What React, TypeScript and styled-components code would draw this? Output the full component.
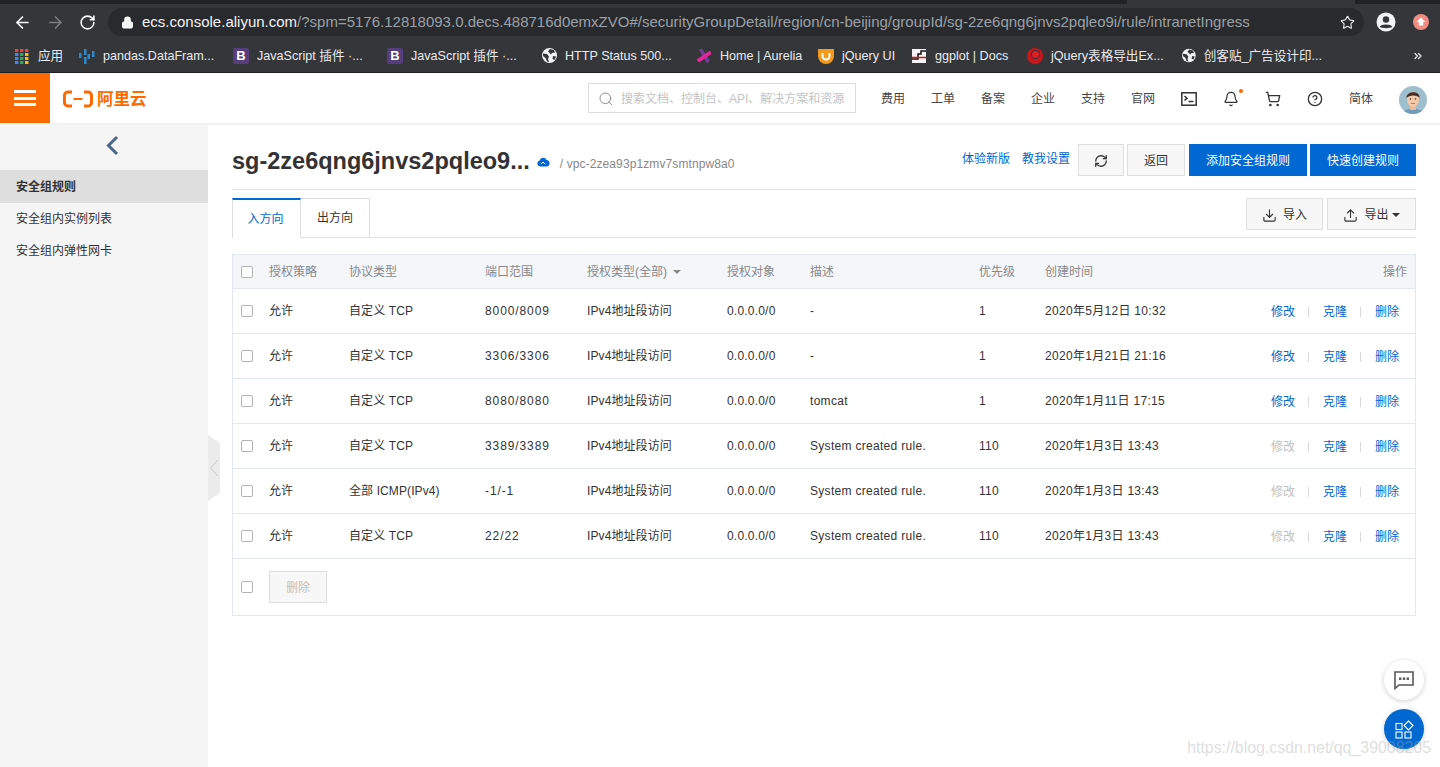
import React from "react";
import styled, { createGlobalStyle } from "styled-components";
import {
  ArrowLeft,
  ArrowRight,
  RotateCw,
  Lock,
  Star,
  Bell,
  ShoppingCart,
  CircleHelp,
  Search,
  RefreshCw,
  Download,
  Upload,
  ChevronsRight,
} from "lucide-react";

const FONT = `"Liberation Sans", "Noto Sans CJK SC", sans-serif`;
const BLUE = "#0068d0";

const GlobalStyle = createGlobalStyle`
  html, body {
    margin: 0;
    padding: 0;
    height: 100%;
    overflow: hidden;
    background: #fff;
    font-family: ${FONT};
    line-height: 16px;
  }
  * { box-sizing: border-box; }
`;

const Page = styled.div`
  position: relative;
  width: 1440px;
  height: 767px;
  overflow: hidden;
  display: flex;
  flex-direction: column;
`;

/* browser chrome */
const TabStrip = styled.div`
  height: 4px;
  background: #202124;
  padding-left: 1127px;
`;
const ActiveTab = styled.div`
  width: 228px;
  height: 4px;
  background: #35363a;
`;
const Toolbar = styled.div`
  height: 32px;
  background: #35363a;
  display: flex;
  align-items: flex-end;
  padding-left: 13px;
  color: #fff;
`;
const NavIcons = styled.div`
  width: 95px;
  height: 28px;
  display: flex;
  align-items: center;
  gap: 14px;
`;
const UrlBar = styled.div`
  width: 1256px;
  height: 28px;
  border-radius: 14px;
  background: #292a2d;
  display: flex;
  align-items: center;
  padding: 0 9px 0 13px;
  font-size: 15px;
  white-space: nowrap;
`;
const UrlHost = styled.span`
  color: #f1f3f4;
  margin-left: 8px;
`;
const UrlRest = styled.span`
  color: #9aa0a6;
  flex: 1;
`;
const ProfileIcons = styled.div`
  flex: 1;
  height: 28px;
  display: flex;
  align-items: center;
  gap: 17px;
  padding-left: 12px;
`;
const Bookmarks = styled.div`
  height: 37px;
  background: #35363a;
  border-bottom: 1px solid #1e1f22;
  display: flex;
  align-items: center;
  padding: 3px 0 0 15px;
  color: #e8eaed;
  font-size: 12.6px;
`;
const Bookmark = styled.div<{ $w: number; $gap?: number }>`
  width: ${(p) => p.$w}px;
  flex: none;
  display: flex;
  align-items: center;
  gap: ${(p) => p.$gap ?? 8}px;
  white-space: nowrap;
`;
const Favicon = styled.span<{ $bg: string }>`
  width: 16px;
  height: 16px;
  flex: none;
  border-radius: 2px;
  background: ${(p) => p.$bg};
  color: #fff;
  font-size: 13px;
  font-weight: 700;
  display: flex;
  align-items: center;
  justify-content: center;
`;
const MoreBookmarks = styled.div`
  margin-left: auto;
  margin-right: 16px;
  display: flex;
`;

/* console header */
const ConsoleHeader = styled.header`
  height: 52px;
  flex: none;
  background: #fff;
  border-bottom: 2px solid #f1f1f2;
  display: flex;
  align-items: flex-start;
`;
const MenuButton = styled.div`
  width: 50px;
  height: 50px;
  background: #ff6a00;
  display: flex;
  flex-direction: column;
  align-items: center;
  justify-content: center;
  gap: 3.5px;
`;
const MenuBar = styled.span`
  width: 22px;
  height: 3px;
  background: #fff;
`;
const Logo = styled.div`
  margin-left: 13px;
  width: 525px;
  height: 50px;
  padding-top: 2px;
  display: flex;
  align-items: center;
  gap: 4px;
  color: #ff6a00;
  font-size: 16.5px;
  font-weight: 700;
`;
const SearchBox = styled.div`
  width: 268px;
  height: 30px;
  margin-top: 10px;
  padding: 1px 0 0 9px;
  border: 1px solid #dcdcdc;
  display: flex;
  align-items: center;
  gap: 7px;
  font-size: 12px;
  color: #c4c4c4;
  white-space: nowrap;
`;
const TopNav = styled.nav`
  height: 50px;
  margin-left: 25px;
  padding-top: 2px;
  display: flex;
  align-items: center;
  font-size: 12px;
  color: #444;
  gap: 26px;
`;
const BellWrap = styled.span`
  position: relative;
  display: flex;
`;
const BellDot = styled.span`
  position: absolute;
  top: -2px;
  right: -4px;
  width: 4px;
  height: 4px;
  border-radius: 50%;
  background: #ff6a00;
`;
const AvatarWrap = styled.span`
  display: flex;
  margin-top: 2px;
`;

/* body */
const Body = styled.div`
  flex: 1;
  display: flex;
  min-height: 0;
`;
const Sidebar = styled.aside`
  width: 208px;
  flex: none;
  background: #f5f5f6;
`;
const SideBack = styled.div`
  height: 45px;
  padding: 10px 0 0 105px;
  display: flex;
  align-items: flex-start;
`;
const SideItem = styled.div<{ $active?: boolean }>`
  height: 33px;
  margin-bottom: ${(p) => (p.$active ? 0 : -1)}px;
  padding: 0 0 ${(p) => (p.$active ? 0 : 2)}px 16px;
  display: flex;
  align-items: center;
  font-size: 12px;
  color: #333;
  font-weight: ${(p) => (p.$active ? 700 : 400)};
  background: ${(p) => (p.$active ? "#dedede" : "transparent")};
`;
const Collapse = styled.div`
  position: absolute;
  left: 208px;
  top: 435px;
  width: 12px;
  height: 66px;
  background: #ebebeb;
  clip-path: polygon(0 0, 100% 12%, 100% 88%, 0 100%);
  display: flex;
  align-items: center;
  justify-content: center;
`;

const Main = styled.main`
  flex: 1;
  padding: 0 24px;
`;
const TitleRow = styled.div`
  height: 65px;
  border-bottom: 1px solid #dedede;
  display: flex;
  align-items: flex-start;
`;
const Title = styled.h1`
  margin: 22px 0 0;
  font-size: 23.5px;
  line-height: 28px;
  font-weight: 700;
  color: #333;
  white-space: nowrap;
`;
const CloudIcon = styled.span`
  margin: 32px 0 0 7px;
  display: flex;
`;
const VpcPath = styled.span`
  margin: 31px 0 0 10px;
  font-size: 12px;
  color: #888;
  letter-spacing: 0.1px;
`;
const HeaderActions = styled.div`
  margin-left: auto;
  margin-top: 19px;
  display: flex;
  align-items: flex-start;
`;
const TextLink = styled.a`
  font-size: 12px;
  line-height: 30px;
  color: ${BLUE};
  margin-right: 12px;
  white-space: nowrap;
`;
const Button = styled.button<{ $w: number; $primary?: boolean; $disabled?: boolean; $ml?: number }>`
  width: ${(p) => p.$w}px;
  height: 32px;
  flex: none;
  margin: 0 0 0 ${(p) => p.$ml ?? 0}px;
  padding: 2px 0 0;
  border: 1px solid ${(p) => (p.$primary ? BLUE : "#dedede")};
  background: ${(p) => (p.$primary ? BLUE : "#f7f7f7")};
  color: ${(p) => (p.$primary ? "#fff" : p.$disabled ? "#c1c1c1" : "#333")};
  font-family: ${FONT};
  font-size: 12px;
  line-height: 16px;
  display: flex;
  align-items: center;
  justify-content: center;
  gap: 6px;
`;
const Caret = styled.span<{ $color?: string; $ml?: number }>`
  width: 0;
  height: 0;
  margin-left: ${(p) => p.$ml ?? 0}px;
  border-left: 4px solid transparent;
  border-right: 4px solid transparent;
  border-top: 4px solid ${(p) => p.$color ?? "#333"};
`;

const TabsRow = styled.div`
  margin-top: 8px;
  height: 40px;
  border-bottom: 1px solid #dedede;
  display: flex;
  align-items: flex-start;
`;
const Tab = styled.div<{ $active?: boolean; $w: number }>`
  width: ${(p) => p.$w}px;
  height: 40px;
  padding-right: ${(p) => (p.$active ? 2 : 0)}px;
  background: #fff;
  border: 1px solid #dedede;
  border-left-width: ${(p) => (p.$active ? 1 : 0)}px;
  border-top: ${(p) => (p.$active ? `2px solid ${BLUE}` : "1px solid #dedede")};
  border-bottom: ${(p) => (p.$active ? "1px solid #fff" : "1px solid #dedede")};
  color: ${(p) => (p.$active ? BLUE : "#333")};
  font-size: 12px;
  display: flex;
  align-items: center;
  justify-content: center;
`;
const TabTools = styled.div`
  margin-left: auto;
  display: flex;
  gap: 4px;
`;

const Table = styled.div`
  margin-top: 16px;
  border: 1px solid #e3e7ef;
  font-size: 12px;
  color: #333;
`;
const Row = styled.div<{ $head?: boolean }>`
  height: ${(p) => (p.$head ? 34 : 45)}px;
  display: grid;
  grid-template-columns: 36px 80px 136px 102px 140px 83px 169px 66px 1fr auto;
  align-items: center;
  background: ${(p) => (p.$head ? "#f4f6fa" : "#fff")};
  border-bottom: 1px solid #e3e7ef;
  color: ${(p) => (p.$head ? "#888" : "#333")};
  white-space: nowrap;
`;
const Cell = styled.span<{ $ls?: number }>`
  letter-spacing: ${(p) => p.$ls ?? 0}px;
`;
const SortHead = styled.span`
  display: flex;
  align-items: center;
  gap: 6px;
`;
const Checkbox = styled.span`
  width: 12px;
  height: 12px;
  margin-left: 8px;
  border: 1px solid #b3b3b3;
  border-radius: 2px;
  background: #fff;
  display: block;
`;
const HeadOps = styled.span`
  padding-right: 8px;
  text-align: right;
`;
const Ops = styled.span`
  display: flex;
  align-items: center;
  padding: 1px 16px 0 0;
`;
const OpLink = styled.a<{ $off?: boolean }>`
  color: ${(p) => (p.$off ? "#c1c1c1" : BLUE)};
`;
const OpSep = styled.span`
  width: 1px;
  height: 10px;
  margin: 0 13.5px;
  background: #d8d8d8;
`;
const TableFoot = styled.div`
  height: 56px;
  display: flex;
  align-items: center;
  gap: 16px;
`;

/* floating */
const Fab = styled.div<{ $primary?: boolean; $top: number }>`
  position: absolute;
  left: 1384px;
  top: ${(p) => p.$top}px;
  width: 40px;
  height: 40px;
  border-radius: 50%;
  background: ${(p) => (p.$primary ? BLUE : "#fff")};
  box-shadow: 0 1px 5px rgba(0, 0, 0, 0.2);
  display: flex;
  align-items: center;
  justify-content: center;
`;
const Watermark = styled.div`
  position: absolute;
  right: 9px;
  top: 739px;
  font-size: 15.9px;
  line-height: 18px;
  color: rgba(170, 170, 170, 0.4);
  white-space: nowrap;
`;

const AppsIcon = () => (
  <svg width="14" height="16" viewBox="0 0 14 16">
    {["#e8453c", "#e8453c", "#e8453c", "#4285f4", "#34a853", "#fbbc05", "#4285f4", "#34a853", "#fbbc05", "#4285f4", "#34a853", "#fbbc05"].map(
      (c, i) => (
        <rect key={i} x={(i % 3) * 5} y={Math.floor(i / 3) * 4 + 1} width="3.4" height="3" fill={c} />
      )
    )}
  </svg>
);

const PandasIcon = () => (
  <svg width="16" height="16" viewBox="0 0 16 16" fill="#2f86c8">
    <rect x="0" y="5" width="2.5" height="5" />
    <rect x="5" y="1" width="2.5" height="6" />
    <rect x="5" y="9" width="2.5" height="7" />
    <rect x="8.5" y="6" width="2.5" height="5" />
    <rect x="13" y="3" width="2.5" height="6" />
  </svg>
);

const AureliaIcon = () => (
  <svg width="16" height="16" viewBox="0 0 16 16">
    <path d="M3 2 L6 0.5 L14 13 L11 15.5 Z" fill="#7a3ea8" opacity="0.85" />
    <path d="M0.5 11.5 L14 2.5 L15.5 6 L3 14.5 Z" fill="#e6249b" />
  </svg>
);

const JQueryIcon = () => (
  <svg width="16" height="16" viewBox="0 0 16 16">
    <path d="M0 1 H16 V8 A8 8 0 0 1 0 8 Z" fill="#f39a1d" />
    <path d="M4.5 5 V8 A3.5 3.5 0 0 0 11.5 8 V5" fill="none" stroke="#fff" strokeWidth="2" />
  </svg>
);

const GgplotIcon = () => (
  <svg width="14" height="14" viewBox="0 0 14 14">
    <rect width="14" height="14" fill="#f4f4f4" />
    <path d="M0 10 H6 V5 H9 V2 H14" fill="none" stroke="#111" strokeWidth="1.5" />
    <path d="M0 8.5 H14" stroke="#e01010" strokeWidth="1.5" />
  </svg>
);

const RedIcon = () => (
  <svg width="16" height="16" viewBox="0 0 16 16">
    <circle cx="8" cy="8" r="8" fill="#c8161d" />
    <circle cx="8.5" cy="6.5" r="4.5" fill="#35363a" />
    <circle cx="8.5" cy="6.5" r="3.5" fill="#e02020" />
  </svg>
);

const GlobeIcon = () => (
  <svg width="15" height="15" viewBox="0 0 15 15">
    <circle cx="7.5" cy="7.5" r="7.5" fill="#f1f3f4" />
    <path d="M1 5.5 L5 6 L7 8.5 L6 11 L7 14 L5 13.5 L3.5 10 L1 8 Z" fill="#35363a" />
    <path d="M8 1 L12 2 L13 4.5 L10 5 L9 6.5 L7.5 5 L6 3.5 Z" fill="#35363a" />
    <path d="M11 8 L14 8.5 L12.5 12 L10.5 11 Z" fill="#35363a" />
  </svg>
);

const ProfileIcon = () => (
  <svg width="20" height="20" viewBox="0 0 20 20">
    <circle cx="10" cy="10" r="9.5" fill="#f1f3f4" />
    <circle cx="10" cy="7.5" r="3.2" fill="#35363a" />
    <path d="M3.8 15 C5 11.8 15 11.8 16.2 15 C14.5 16.5 5.5 16.5 3.8 15 Z" fill="#35363a" />
  </svg>
);

const UpdateIcon = () => (
  <svg width="16" height="16" viewBox="0 0 16 16">
    <circle cx="8" cy="8" r="8" fill="#f28b82" />
    <path d="M8 3.5 L12.5 8 H10.2 V11.5 H5.8 V8 H3.5 Z" fill="#fff" />
  </svg>
);

const LogoMark = () => (
  <svg width="30" height="18" viewBox="0 0 30 18" fill="none" stroke="#ff6a00">
    <path d="M9 2 H5 A3.5 3.5 0 0 0 1.5 5.5 V12.5 A3.5 3.5 0 0 0 5 16 H9" strokeWidth="3" />
    <path d="M21 2 H25 A3.5 3.5 0 0 1 28.5 5.5 V12.5 A3.5 3.5 0 0 1 25 16 H21" strokeWidth="3" />
    <path d="M10.5 9 H19.5" strokeWidth="2" />
  </svg>
);

const TerminalIcon = () => (
  <svg width="16" height="14" viewBox="0 0 16 14" fill="none" stroke="#333" strokeWidth="1.5">
    <rect x="0.8" y="0.8" width="14.4" height="12.4" />
    <path d="M3.5 4 L6 6.2 L3.5 8.4" />
    <path d="M7.5 9.5 H12.5" />
  </svg>
);

const Avatar = () => (
  <svg width="28" height="28" viewBox="0 0 28 28">
    <clipPath id="avatar-clip">
      <circle cx="14" cy="14" r="14" />
    </clipPath>
    <g clipPath="url(#avatar-clip)">
      <rect width="28" height="28" fill="#9fbfce" />
      <path d="M3 28 C4 21 24 21 25 28 Z" fill="#6f9db8" />
      <rect x="11" y="18" width="6" height="6" fill="#eab998" />
      <ellipse cx="14" cy="13.5" rx="6" ry="7.5" fill="#f3c9a8" />
      <path d="M7.5 12 C7 5 21 4 20.5 12 C19 8.5 10 8.5 7.5 12 Z" fill="#4a2f25" />
      <circle cx="11.5" cy="13" r="0.8" fill="#333" />
      <circle cx="16.5" cy="13" r="0.8" fill="#333" />
      <path d="M12 17.5 H16" stroke="#b5654f" strokeWidth="0.8" />
    </g>
  </svg>
);

const CloudSmall = () => (
  <svg width="13" height="10" viewBox="0 0 13 10">
    <path d="M3 9.5 A3 3 0 0 1 2.6 3.6 A3.7 3.7 0 0 1 9.6 3 A3.3 3.3 0 0 1 10 9.5 Z" fill={BLUE} />
    <path d="M4 7 L6 5 L8 7" fill="none" stroke="#fff" strokeWidth="1" />
  </svg>
);

const BackChevron = () => (
  <svg width="14" height="21" viewBox="0 0 14 21" fill="none" stroke="#4d6788" strokeWidth="3">
    <path d="M12 2 L3.5 10.5 L12 19" />
  </svg>
);

const HandleChevron = () => (
  <svg width="10" height="18" viewBox="0 0 10 18" fill="none" stroke="#c6c6c6" strokeWidth="1">
    <path d="M9 1 L1.5 9 L9 17" />
  </svg>
);

const ChatIcon = () => (
  <svg width="20" height="19" viewBox="0 0 20 19" fill="none">
    <path d="M1 1 H19 V14 H5 L1 17.5 Z" stroke="#555" strokeWidth="1.6" />
    <rect x="5" y="6.5" width="2.4" height="2.4" fill="#555" />
    <rect x="8.8" y="6.5" width="2.4" height="2.4" fill="#555" />
    <rect x="12.6" y="6.5" width="2.4" height="2.4" fill="#555" />
  </svg>
);

const WidgetsIcon = () => (
  <svg width="19" height="19" viewBox="0 0 19 19" fill="none" stroke="#fff" strokeWidth="1.1">
    <rect x="1" y="3.5" width="6" height="6" />
    <rect x="1" y="12" width="6" height="6" />
    <rect x="10" y="12" width="6" height="6" />
    <path d="M13.5 1 L18 5.5 L13.5 10 L9 5.5 Z" />
  </svg>
);

const RULES = [
  { proto: "自定义 TCP", port: "8000/8009", desc: "-", prio: "1", time: "2020年5月12日 10:32", locked: false },
  { proto: "自定义 TCP", port: "3306/3306", desc: "-", prio: "1", time: "2020年1月21日 21:16", locked: false },
  { proto: "自定义 TCP", port: "8080/8080", desc: "tomcat", prio: "1", time: "2020年1月11日 17:15", locked: false },
  { proto: "自定义 TCP", port: "3389/3389", desc: "System created rule.", prio: "110", time: "2020年1月3日 13:43", locked: true },
  { proto: "全部 ICMP(IPv4)", port: "-1/-1", desc: "System created rule.", prio: "110", time: "2020年1月3日 13:43", locked: true },
  { proto: "自定义 TCP", port: "22/22", desc: "System created rule.", prio: "110", time: "2020年1月3日 13:43", locked: true },
];

const App = () => (
  <Page>
    <GlobalStyle />
    <TabStrip>
      <ActiveTab />
    </TabStrip>
    <Toolbar>
      <NavIcons>
        <ArrowLeft size={19} strokeWidth={2} />
        <ArrowRight size={19} strokeWidth={2} color="#7b7d80" />
        <RotateCw size={17} strokeWidth={2.2} />
      </NavIcons>
      <UrlBar>
        <Lock size={13} fill="#f1f3f4" strokeWidth={2} />
        <UrlHost>ecs.console.aliyun.com</UrlHost>
        <UrlRest>/?spm=5176.12818093.0.decs.488716d0emxZVO#/securityGroupDetail/region/cn-beijing/groupId/sg-2ze6qng6jnvs2pqleo9i/rule/intranetIngress</UrlRest>
        <Star size={15} strokeWidth={1.8} color="#e8eaed" />
      </UrlBar>
      <ProfileIcons>
        <ProfileIcon />
        <UpdateIcon />
      </ProfileIcons>
    </Toolbar>
    <Bookmarks>
      <Bookmark $w={64} $gap={9}>
        <AppsIcon />
        应用
      </Bookmark>
      <Bookmark $w={154}>
        <PandasIcon />
        pandas.DataFram...
      </Bookmark>
      <Bookmark $w={154}>
        <Favicon $bg="#563d7c">B</Favicon>
        JavaScript 插件 ·...
      </Bookmark>
      <Bookmark $w={155}>
        <Favicon $bg="#563d7c">B</Favicon>
        JavaScript 插件 ·...
      </Bookmark>
      <Bookmark $w={154}>
        <GlobeIcon />
        HTTP Status 500...
      </Bookmark>
      <Bookmark $w={122}>
        <AureliaIcon />
        Home | Aurelia
      </Bookmark>
      <Bookmark $w={94}>
        <JQueryIcon />
        jQuery UI
      </Bookmark>
      <Bookmark $w={115} $gap={9}>
        <GgplotIcon />
        ggplot | Docs
      </Bookmark>
      <Bookmark $w={155}>
        <RedIcon />
        jQuery表格导出Ex...
      </Bookmark>
      <Bookmark $w={140}>
        <GlobeIcon />
        创客贴_广告设计印...
      </Bookmark>
      <MoreBookmarks>
        <ChevronsRight size={12} strokeWidth={2.5} />
      </MoreBookmarks>
    </Bookmarks>

    <ConsoleHeader>
      <MenuButton>
        <MenuBar />
        <MenuBar />
        <MenuBar />
      </MenuButton>
      <Logo>
        <LogoMark />
        阿里云
      </Logo>
      <SearchBox>
        <Search size={16} strokeWidth={1.4} color="#888" />
        搜索文档、控制台、API、解决方案和资源
      </SearchBox>
      <TopNav>
        <span>费用</span>
        <span>工单</span>
        <span>备案</span>
        <span>企业</span>
        <span>支持</span>
        <span>官网</span>
        <TerminalIcon />
        <BellWrap>
          <Bell size={16} strokeWidth={1.8} color="#333" />
          <BellDot />
        </BellWrap>
        <ShoppingCart size={16} strokeWidth={2} color="#333" />
        <CircleHelp size={16} strokeWidth={2} color="#333" />
        <span>简体</span>
        <AvatarWrap>
          <Avatar />
        </AvatarWrap>
      </TopNav>
    </ConsoleHeader>

    <Body>
      <Sidebar>
        <SideBack>
          <BackChevron />
        </SideBack>
        <SideItem $active>安全组规则</SideItem>
        <SideItem>安全组内实例列表</SideItem>
        <SideItem>安全组内弹性网卡</SideItem>
      </Sidebar>
      <Main>
        <TitleRow>
          <Title>sg-2ze6qng6jnvs2pqleo9...</Title>
          <CloudIcon>
            <CloudSmall />
          </CloudIcon>
          <VpcPath>/ vpc-2zea93p1zmv7smtnpw8a0</VpcPath>
          <HeaderActions>
            <TextLink>体验新版</TextLink>
            <TextLink>教我设置</TextLink>
            <Button $w={46} $ml={-4}>
              <RefreshCw size={14} strokeWidth={2.2} />
            </Button>
            <Button $w={58} $ml={3}>返回</Button>
            <Button $w={118} $ml={4} $primary>添加安全组规则</Button>
            <Button $w={106} $ml={3} $primary>快速创建规则</Button>
          </HeaderActions>
        </TitleRow>
        <TabsRow>
          <Tab $active $w={69}>入方向</Tab>
          <Tab $w={69}>出方向</Tab>
          <TabTools>
            <Button $w={77}>
              <Download size={15} strokeWidth={1.8} />
              导入
            </Button>
            <Button $w={89}>
              <Upload size={15} strokeWidth={1.8} />
              导出
              <Caret $ml={-3} />
            </Button>
          </TabTools>
        </TabsRow>
        <Table>
          <Row $head>
            <Checkbox />
            <span>授权策略</span>
            <span>协议类型</span>
            <span>端口范围</span>
            <SortHead>
              授权类型(全部) <Caret $color="#888" />
            </SortHead>
            <span>授权对象</span>
            <span>描述</span>
            <span>优先级</span>
            <span>创建时间</span>
            <HeadOps>操作</HeadOps>
          </Row>
          {RULES.map((r, i) => (
            <Row key={i}>
              <Checkbox />
              <span>允许</span>
              <Cell $ls={0.1}>{r.proto}</Cell>
              <Cell $ls={0.9}>{r.port}</Cell>
              <Cell $ls={0.1}>IPv4地址段访问</Cell>
              <Cell $ls={0.2}>0.0.0.0/0</Cell>
              <Cell $ls={0.3}>{r.desc}</Cell>
              <Cell $ls={0.3}>{r.prio}</Cell>
              <Cell $ls={0.3}>{r.time}</Cell>
              <Ops>
                <OpLink $off={r.locked}>修改</OpLink>
                <OpSep />
                <OpLink>克隆</OpLink>
                <OpSep />
                <OpLink>删除</OpLink>
              </Ops>
            </Row>
          ))}
          <TableFoot>
            <Checkbox />
            <Button $w={58} $disabled>删除</Button>
          </TableFoot>
        </Table>
      </Main>
    </Body>

    <Collapse>
      <HandleChevron />
    </Collapse>
    <Fab $top={660}>
      <ChatIcon />
    </Fab>
    <Fab $primary $top={709}>
      <WidgetsIcon />
    </Fab>
    <Watermark>https://blog.csdn.net/qq_39008205</Watermark>
  </Page>
);

export default App;
